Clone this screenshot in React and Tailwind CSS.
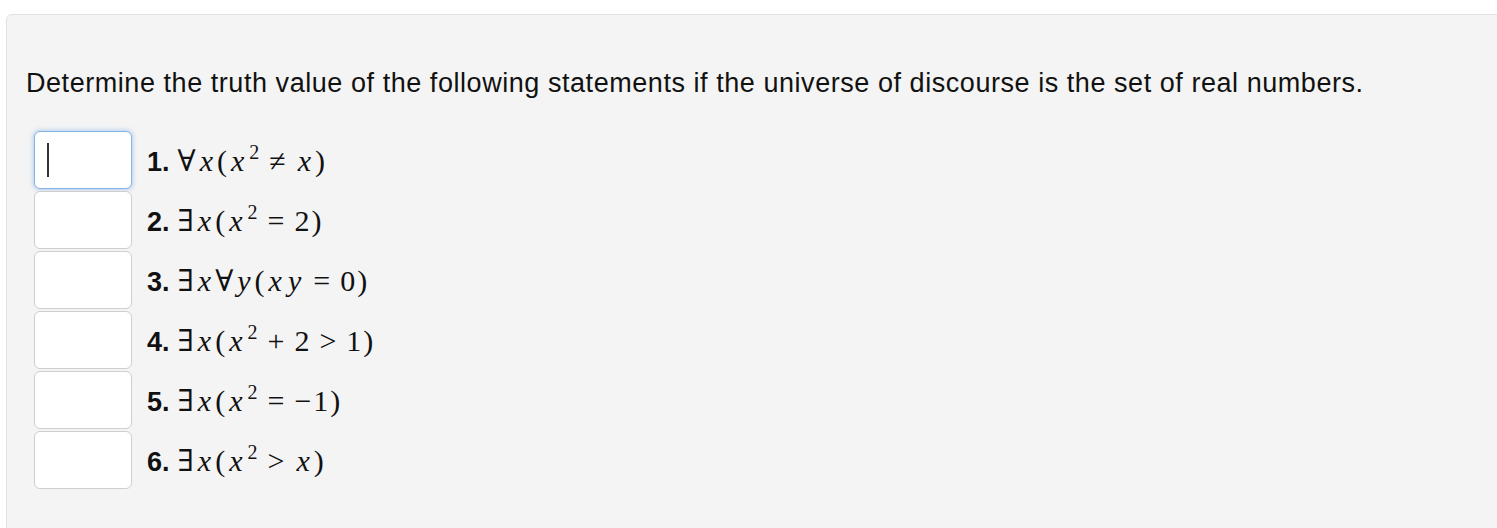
const mathFont = { fontFamily: '"Liberation Serif", "DejaVu Serif", serif' };

function V({ children }) {
  return <span className="italic px-[2px]">{children}</span>;
}

function Sq() {
  return <sup className="text-[20px] not-italic relative -top-[12px] ml-[1px]">2</sup>;
}

function Rel({ children }) {
  return <span className="mx-[8px]">{children}</span>;
}

const items = [
  <>∀<V>x</V>(<V>x</V><Sq /><Rel>≠</Rel><V>x</V>)</>,
  <>∃<V>x</V>(<V>x</V><Sq /><Rel>=</Rel>2)</>,
  <>∃<V>x</V>∀<V>y</V>(<V>x</V><V>y</V><Rel>=</Rel>0)</>,
  <>∃<V>x</V>(<V>x</V><Sq /><Rel>+</Rel>2<Rel>&gt;</Rel>1)</>,
  <>∃<V>x</V>(<V>x</V><Sq /><Rel>=</Rel>−1)</>,
  <>∃<V>x</V>(<V>x</V><Sq /><Rel>&gt;</Rel><V>x</V>)</>,
];

export default function App() {
  return (
    <div className="h-[528px] w-[1497px] overflow-hidden bg-white pt-[14px] pl-[6px]" style={{ fontFamily: '"Liberation Sans", Arial, sans-serif' }}>
      <div className="w-[1520px] h-[560px] bg-[#f4f4f4] border border-[#e2e2e2] rounded-tl-[6px] pl-[19px] pt-[51px]">
        <p className="text-[27px] leading-[34px] tracking-[0.55px] text-[#111]">
          Determine the truth value of the following statements if the universe of discourse is the set of real numbers.
        </p>
        <div className="mt-[31px] ml-[8px] flex flex-col gap-[2px]">
          {items.map((m, i) => (
            <div key={i} className="flex items-center">
              <div
                className={`w-[98px] h-[58px] rounded-[6px] bg-white border flex items-center ${
                  i === 0
                    ? 'border-[#86b3e6] shadow-[0_0_4px_1px_rgba(120,170,230,0.5)]'
                    : 'border-[#cfcfcf]'
                }`}
              >
                {i === 0 && <div className="ml-[12px] w-[1.5px] h-[34px] bg-[#333]" />}
              </div>
              <div className="ml-[15px] flex items-baseline text-[#111]">
                <span className="text-[27px] font-bold mr-[8px]">{i + 1}.</span>
                <span className="text-[30px] tracking-[2px]" style={mathFont}>{m}</span>
              </div>
            </div>
          ))}
        </div>
      </div>
    </div>
  );
}
